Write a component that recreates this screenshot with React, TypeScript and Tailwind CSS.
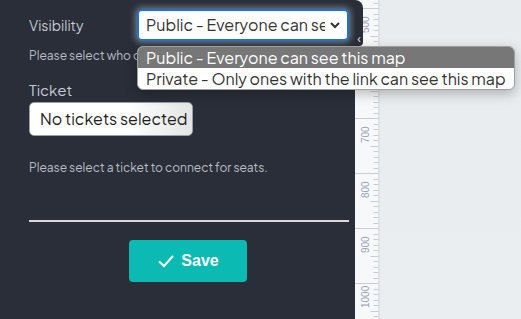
import React from "react";

const font = { fontFamily: "'Plus Jakarta Sans', Inter, 'Noto Sans', sans-serif" };

const Ruler = () => {
  const majors = [8, 63, 118, 173, 228, 283];
  const labels = ["500", "600", "700", "800", "900", "1000"];
  const ticks: number[] = [];
  for (let y = -47; y < 330; y += 5.5) ticks.push(y);
  return (
    <svg width="25" height="319" className="block">
      <rect x="0" y="0" width="25" height="319" fill="#f7f8f9" />
      {ticks.map((y, i) => {
        const k = Math.round((y - 8) / 5.5);
        const mod = ((k % 10) + 10) % 10;
        if (mod === 0) return null;
        const len = mod === 5 ? 8 : 5;
        return (
          <line
            key={i}
            x1={23.5 - len}
            x2={23.5}
            y1={Math.round(y) + 0.5}
            y2={Math.round(y) + 0.5}
            stroke="#c9ccd1"
            strokeWidth="1"
          />
        );
      })}
      {majors.map((y, i) => (
        <g key={y}>
          <line x1="0" x2="24" y1={y + 0.5} y2={y + 0.5} stroke="#c9ccd1" />
          <text
            x="0"
            y="0"
            fontSize="10"
            fill="#97a3b8"
            fontFamily="'Liberation Sans', sans-serif"
            transform={`translate(14 ${y + 25}) rotate(-90)`}
          >
            {labels[i]}
          </text>
        </g>
      ))}
      <line x1="24" x2="24" y1="0" y2="319" stroke="#c9ccd1" />
    </svg>
  );
};

export default function App() {
  return (
    <div className="relative flex w-[521px] h-[319px] overflow-hidden bg-[#e9ecef]" style={font}>
      <div className="relative w-[355px] h-full shrink-0 bg-[#292e38] pl-[29px] pr-[6px]">
        <div className="flex items-center pt-[9px]">
          <div className="w-[108px] text-[14px] text-[#c5cad2]">Visibility</div>
          <div className="flex items-center w-[212px] h-[32px] bg-white rounded-[5px] border-2 border-[#1b73d3] shadow-[0_0_6px_2px_rgba(255,255,255,0.35)] pl-[7px] pr-[6px]">
            <span className="flex-1 overflow-hidden whitespace-nowrap text-[16px] text-[#333]">
              Public - Everyone can see this map
            </span>
            <svg width="12" height="12" viewBox="0 0 12 12" className="ml-1 shrink-0">
              <path d="M2 4l4 4 4-4" fill="none" stroke="#333" strokeWidth="2" />
            </svg>
          </div>
        </div>
        <div className="mt-[6px] text-[12px] text-[#b9bec6] whitespace-nowrap">
          Please select who can see this map.
        </div>
        <div className="mt-[14px] text-[15px] text-[#c5cad2]">Ticket</div>
        <div className="w-[164px] h-[34px] flex items-center pl-[10px] rounded-[5px] border border-[#9a9ea5] bg-[linear-gradient(90deg,#ffffff_60%,#e4e4e4)] text-[16px] text-[#1d1d1d] whitespace-nowrap">
          No tickets selected
        </div>
        <div className="mt-[23px] text-[12px] text-[#b9bec6] whitespace-nowrap">
          Please select a ticket to connect for seats.
        </div>
        <div className="mt-[43px] w-[320px] h-[2px] bg-[#d6d8db]" />
        <div className="flex justify-center w-[320px] mt-[18px]">
          <div className="ml-[-2px] flex items-center justify-center gap-[6px] w-[118px] h-[42px] rounded-[4px] bg-[#0bbab2] text-white text-[16px] font-bold" style={{ fontFamily: "'Liberation Sans', Arial, sans-serif" }}>
            <svg width="18" height="14" viewBox="0 0 18 14">
              <path d="M2 7.5l5 4.5 9-10" fill="none" stroke="#fff" strokeWidth="2" />
            </svg>
            Save
          </div>
        </div>
        <div className="absolute left-[355px] top-0 w-[8px] h-[46px] bg-[#292e38] rounded-tr-[8px] rounded-br-[4px] z-10 flex items-end justify-center pb-[1px]">
          <span className="text-[#e5e7ea] text-[12px] leading-none">‹</span>
        </div>
      </div>
      <div className="shrink-0">
        <Ruler />
      </div>
      <div className="flex-1 bg-[linear-gradient(180deg,#e9ecef,#ebeef1)]" />
      <div className="absolute left-[137px] top-[46px] w-[378px] rounded-[6px] border border-[#a0a0a0] bg-white overflow-hidden shadow-[0_4px_12px_rgba(0,0,0,0.25)] z-20 text-[16px] leading-[21px] whitespace-nowrap">
        <div className="bg-[#777777] text-white pl-[8px]">Public - Everyone can see this map</div>
        <div className="text-[#333] pl-[8px]">Private - Only ones with the link can see this map</div>
      </div>
    </div>
  );
}
